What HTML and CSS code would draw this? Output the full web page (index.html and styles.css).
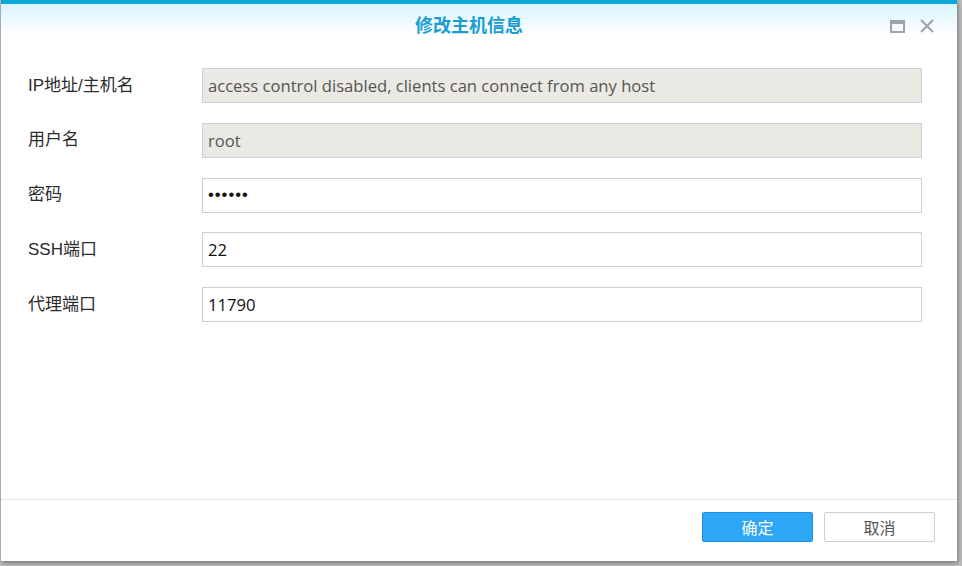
FILE: index.html
```html
<!DOCTYPE html>
<html lang="zh-CN">
<head>
  <meta charset="UTF-8" />
  <title>修改主机信息</title>
  <link rel="stylesheet" href="styles.css">
</head>
<body>
  <div class="dialog">
    <div class="dialog-header">
      <h2 class="dialog-title">修改主机信息</h2>
      <div class="dialog-tools">
        <!-- maximize -->
        <svg width="15" height="13" viewBox="0 0 15 13">
          <rect x="1" y="1" width="13" height="11" fill="none" stroke="#9ea3a8" stroke-width="2"/>
          <rect x="1" y="1" width="13" height="3" fill="#9ea3a8"/>
        </svg>
        <!-- close -->
        <svg width="16" height="16" viewBox="0 0 16 16">
          <path d="M2 2 L14 14 M14 2 L2 14" stroke="#9ea3a8" stroke-width="2" fill="none"/>
        </svg>
      </div>
    </div>

    <form class="dialog-body" action="#" method="post">
      <div class="form-row">
        <label for="host">IP地址/主机名</label>
        <input type="text" id="host" value="access control disabled, clients can connect from any host" readonly />
      </div>
      <div class="form-row">
        <label for="user">用户名</label>
        <input type="text" id="user" value="root" readonly />
      </div>
      <div class="form-row">
        <label for="password">密码</label>
        <input type="password" id="password" value="secret" />
      </div>
      <div class="form-row">
        <label for="sshPort">SSH端口</label>
        <input type="text" id="sshPort" value="22" />
      </div>
      <div class="form-row">
        <label for="proxyPort">代理端口</label>
        <input type="text" id="proxyPort" value="11790" />
      </div>
    </form>

    <div class="dialog-footer">
      <button type="button" class="btn btn-primary">确定</button>
      <button type="button" class="btn">取消</button>
    </div>
  </div>
</body>
</html>
```

FILE: styles.css
```css
body {
  margin: 0;
  background: #b9bbbd;
  font-family: "Liberation Sans", Arial, "Noto Sans CJK SC", sans-serif;
  color: #333;
  height: 566px;
  overflow: hidden;
}
.dialog {
  margin-left: 1px;
  width: 956px;
  height: 561px;
  background: white;
  display: flex;
  flex-direction: column;
  box-shadow: 1px 2px 4px rgba(0,0,0,0.35);
}
.dialog-header {
  position: relative;
  border-top: 4px solid #0aa8d6;
  height: 31px;
  background: linear-gradient(#d8f5fd, #ffffff);
  text-align: center;
  padding-right: 20px;
}
.dialog-title {
  margin: 0;
  font-family: "Noto Sans CJK SC", sans-serif;
  font-size: 18px;
  font-weight: bold;
  line-height: 1;
  padding-top: 11px;
  color: #1a9ed2;
}
.dialog-tools {
  position: absolute;
  right: 22px;
  top: 14px;
  display: flex;
  align-items: center;
  gap: 14px;
}
.dialog-tools svg {
  display: block;
}
.dialog-body {
  flex: 1;
  padding: 33px 35px 0 27px;
}
.form-row {
  display: flex;
  align-items: center;
  margin-bottom: 19.75px;
}
.form-row label {
  width: 174px;
  font-size: 17px;
  color: #2b2b2b;
  margin-top: -5px;
}
.form-row input {
  width: 720px;
  height: 35px;
  box-sizing: border-box;
  border: 1px solid #c6d1dc;
  padding: 0 5px;
  font-family: "Open Sans", "Liberation Sans", sans-serif;
  font-size: 16.6px;
  color: #111;
  background: white;
  outline: none;
}
.form-row input[readonly] {
  background: #ebe9e3;
  color: #555;
}
.form-row input[type="password"] {
  font-family: "Liberation Sans", sans-serif;
  letter-spacing: 1px;
}
.dialog-footer {
  height: 62px;
  border-top: 1px solid #e2e2e2;
  display: flex;
  justify-content: flex-end;
  align-items: flex-start;
  gap: 11px;
  padding: 12px 22px 0 0;
  box-sizing: border-box;
}
.btn {
  width: 111px;
  height: 30px;
  border: 1px solid #c6d1dc;
  border-radius: 2px;
  background: white;
  color: #555;
  font-family: "Noto Sans CJK SC", sans-serif;
  font-size: 16px;
  cursor: pointer;
}
.btn-primary {
  background: #2ea6f6;
  border-color: #1f90e0;
  color: white;
}
```
